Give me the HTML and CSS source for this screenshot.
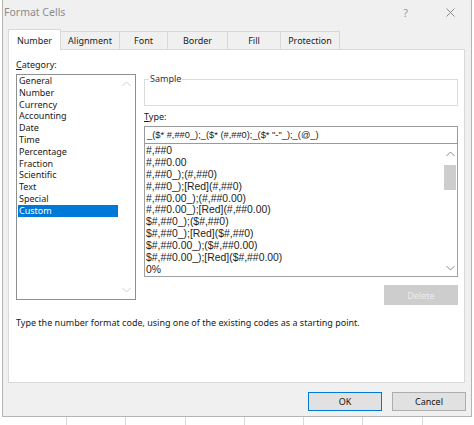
FILE: index.html
```html
<!doctype html>
<html>
<head>
    <title>Format Cells</title>
    <meta charset="utf-8"/>
    <link rel="stylesheet" href="styles.css">
</head>
<body>
<div class="dialog">
    <div class="titlebar">
        <span class="title">Format Cells</span>
        <span class="help">?</span>
        <svg class="close" width="9" height="9" viewBox="0 0 9 9"><path d="M0.5 0.5L8.5 8.5M8.5 0.5L0.5 8.5" stroke="#8a8a8a" stroke-width="1" fill="none"/></svg>
    </div>

    <div class="tabs">
        <div class="tab active">Number</div>
        <div class="tab">Alignment</div>
        <div class="tab">Font</div>
        <div class="tab">Border</div>
        <div class="tab">Fill</div>
        <div class="tab">Protection</div>
    </div>

    <div class="panel">
        <div class="left">
            <div class="label"><u>C</u>ategory:</div>
            <div class="listbox cat">
                <ul class="items">
                    <li>General</li>
                    <li>Number</li>
                    <li>Currency</li>
                    <li>Accounting</li>
                    <li>Date</li>
                    <li>Time</li>
                    <li>Percentage</li>
                    <li>Fraction</li>
                    <li>Scientific</li>
                    <li>Text</li>
                    <li>Special</li>
                    <li class="selected">Custom</li>
                </ul>
                <div class="scroll">
                    <svg width="9" height="6" viewBox="0 0 9 6"><path d="M0.5 5L4.5 1L8.5 5" stroke="#cfcfcf" fill="none"/></svg>
                    <svg width="9" height="6" viewBox="0 0 9 6"><path d="M0.5 1L4.5 5L8.5 1" stroke="#cfcfcf" fill="none"/></svg>
                </div>
            </div>
        </div>

        <div class="right">
            <fieldset class="sample">
                <legend>Sample</legend>
                <div class="sample-body"></div>
            </fieldset>
            <div class="label type-label"><u>T</u>ype:</div>
            <div class="input">_($* #,##0_);_($* (#,##0);_($* "-"_);_(@_)</div>
            <div class="listbox codes">
                <ul class="items">
                    <li>#,##0</li>
                    <li>#,##0.00</li>
                    <li>#,##0_);(#,##0)</li>
                    <li>#,##0_);[Red](#,##0)</li>
                    <li>#,##0.00_);(#,##0.00)</li>
                    <li>#,##0.00_);[Red](#,##0.00)</li>
                    <li>$#,##0_);($#,##0)</li>
                    <li>$#,##0_);[Red]($#,##0)</li>
                    <li>$#,##0.00_);($#,##0.00)</li>
                    <li>$#,##0.00_);[Red]($#,##0.00)</li>
                    <li>0%</li>
                </ul>
                <div class="scroll">
                    <svg width="9" height="6" viewBox="0 0 9 6"><path d="M0.5 5L4.5 1L8.5 5" stroke="#8a8a8a" fill="none"/></svg>
                    <div class="thumb"></div>
                    <div class="track"></div>
                    <svg width="9" height="6" viewBox="0 0 9 6"><path d="M0.5 1L4.5 5L8.5 1" stroke="#8a8a8a" fill="none"/></svg>
                </div>
            </div>
            <button class="delete" disabled>Delete</button>
        </div>

        <p class="hint">Type the number format code, using one of the existing codes as a starting point.</p>
    </div>

    <div class="buttons">
        <button class="btn default">OK</button>
        <button class="btn">Cancel</button>
    </div>
</div>

<div class="sheet">
    <div class="cell first"></div>
    <div class="cell"></div>
    <div class="cell"></div>
    <div class="cell"></div>
    <div class="cell"></div>
    <div class="cell"></div>
    <div class="cell"></div>
    <div class="cell"></div>
</div>
</body>
</html>
```

FILE: styles.css
```css
body {
margin: 0;
padding: 0;
background-color: #fff;
font-family: "Noto Sans", "Open Sans", sans-serif;
font-size: 9px;
color: #1a1a1a;
}
.dialog {
width: 470px;
height: 417px;
margin-left: 2px;
box-sizing: border-box;
background-color: #f0f0f0;
border: 1px solid #b4b4b4;
border-top: 0;
display: flex;
flex-direction: column;
}
.titlebar {
height: 24px;
display: flex;
align-items: center;
padding-left: 1px;
}
.title {
font-size: 10.5px;
color: #8c8c8c;
flex: 1;
}
.help {
font-size: 11px;
color: #9a9a9a;
margin-right: 38px;
}
.close {
margin-right: 16px;
}
.tabs {
display: flex;
align-items: flex-end;
height: 20px;
margin-top: 5px;
margin-left: 5px;
position: relative;
z-index: 1;
}
.tab {
height: 18px;
box-sizing: border-box;
border: 1px solid #d9d9d9;
border-left: 0;
border-bottom: 0;
background-color: #f0f0f0;
text-align: center;
line-height: 17px;
color: #222;
}
.tab:nth-child(1) { width: 53px; }
.tab:nth-child(2) { width: 59px; }
.tab:nth-child(3) { width: 48px; }
.tab:nth-child(4) { width: 60px; }
.tab:nth-child(5) { width: 53px; }
.tab:nth-child(6) { width: 59px; }
.tab.active {
height: 21px;
margin-bottom: -1px;
background-color: #fff;
border-left: 1px solid #d9d9d9;
line-height: 22px;
}
.panel {
width: 457px;
height: 334px;
margin-left: 5px;
box-sizing: border-box;
background-color: #fff;
border: 1px solid #d9d9d9;
padding: 8px 6px 0 7px;
display: grid;
grid-template-columns: 120px 1fr;
column-gap: 8px;
align-content: start;
}
.right {
display: flex;
flex-direction: column;
}
.label {
line-height: 12px;
padding: 1px 0 3px 0;
}
.listbox {
display: flex;
box-sizing: border-box;
border: 1px solid #a0a0a0;
overflow: hidden;
}
.items {
list-style: none;
margin: 0;
padding: 0 0 0 1px;
flex: 1;
}
.cat {
height: 226px;
border-color: #8e8f8f;
}
.cat li {
height: 11.8px;
line-height: 11.8px;
padding-left: 1px;
}
.cat li.selected {
background-color: #0078d7;
color: #fff;
}
.scroll {
width: 17px;
display: flex;
flex-direction: column;
align-items: center;
justify-content: space-between;
padding: 6px 0 6px 0;
}
.sample {
margin: 15px 0 0 0;
padding: 0 4px;
border: 1px solid #dcdcdc;
}
.sample legend {
padding: 0 1px;
line-height: 12px;
color: #333;
}
.sample-body {
height: 20px;
}
.type-label {
margin-top: 4px;
}
.input {
height: 18px;
box-sizing: border-box;
border: 1px solid #9a9a9a;
padding-left: 2px;
line-height: 16px;
font-family: "Liberation Sans", Arial, sans-serif;
font-size: 9.3px;
white-space: nowrap;
}
.codes {
height: 133px;
border-top: 0;
font-family: "Liberation Sans", Arial, sans-serif;
font-size: 10.4px;
color: #222;
}
.codes .items {
padding: 1px 0 0 1px;
}
.codes li {
height: 11.9px;
line-height: 11.9px;
white-space: nowrap;
}
.codes .scroll {
width: 14px;
padding: 7px 0 5px 0;
justify-content: flex-start;
}
.codes .thumb {
width: 12px;
height: 25px;
margin-top: 8px;
background-color: #cdcdcd;
}
.codes .track {
flex: 1;
}
.delete {
align-self: flex-end;
width: 74px;
height: 20px;
margin-top: 8px;
border: 0;
background-color: #cdcdcd;
color: #ececec;
font-family: inherit;
font-size: 9px;
padding: 0;
}
.hint {
grid-column: 1 / 3;
margin: 12px 0 0 0;
line-height: 12px;
}
.buttons {
display: flex;
justify-content: flex-end;
gap: 10px;
margin-top: 9px;
padding-right: 5px;
}
.btn {
width: 74px;
height: 19px;
box-sizing: border-box;
border: 1px solid #adadad;
background-color: #e1e1e1;
font-family: inherit;
font-size: 9px;
color: #111;
padding: 0;
}
.btn.default {
border-color: #0078d7;
}
.sheet {
display: flex;
height: 8px;
}
.cell {
width: 59.3px;
flex-shrink: 0;
border-right: 1px solid #d8d8d8;
box-sizing: border-box;
}
.cell.first {
width: 67px;
}
```
